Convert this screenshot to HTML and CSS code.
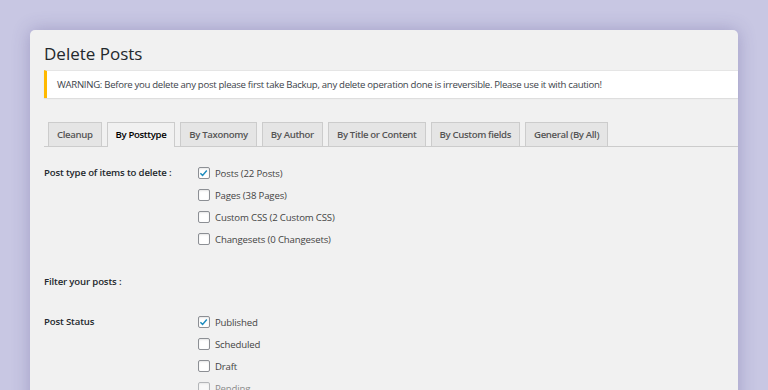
FILE: index.html
```html
<!DOCTYPE html>
<html lang="en">
<head>
  <meta charset="UTF-8" />
  <meta name="viewport" content="width=device-width, initial-scale=1.0"/>
  <title>Delete Posts</title>
  <link rel="stylesheet" href="styles.css">
</head>
<body>

  <div class="wrap">
    <h1>Delete Posts</h1>

    <div class="notice">
      WARNING: Before you delete any post please first take Backup, any delete operation done is irreversible. Please use it with caution!
    </div>

    <div class="tabs">
      <a href="#" class="tab">Cleanup</a>
      <a href="#" class="tab active">By Posttype</a>
      <a href="#" class="tab">By Taxonomy</a>
      <a href="#" class="tab">By Author</a>
      <a href="#" class="tab">By Title or Content</a>
      <a href="#" class="tab">By Custom fields</a>
      <a href="#" class="tab">General (By All)</a>
    </div>

    <div class="field">
      <div class="label">Post type of items to delete :</div>
      <div class="options">
        <label class="option"><span class="box checked"><svg viewBox="0 0 12 12"><path d="M2.6 6.2 L5 8.6 L9.6 3.2" /></svg></span>Posts (22 Posts)</label>
        <label class="option"><span class="box"></span>Pages (38 Pages)</label>
        <label class="option"><span class="box"></span>Custom CSS (2 Custom CSS)</label>
        <label class="option"><span class="box"></span>Changesets (0 Changesets)</label>
      </div>
    </div>

    <div class="field filter">
      <div class="label">Filter your posts :</div>
    </div>

    <div class="field">
      <div class="label">Post Status</div>
      <div class="options">
        <label class="option"><span class="box checked"><svg viewBox="0 0 12 12"><path d="M2.6 6.2 L5 8.6 L9.6 3.2" /></svg></span>Published</label>
        <label class="option"><span class="box"></span>Scheduled</label>
        <label class="option"><span class="box"></span>Draft</label>
        <label class="option faded"><span class="box"></span>Pending</label>
      </div>
    </div>
  </div>

</body>
</html>
```

FILE: styles.css
```css
body {
  margin: 0;
  background-color: #c8c7e3;
  font-family: 'Open Sans', 'Noto Sans', sans-serif;
  color: #23282d;
  height: 390px;
  overflow: hidden;
}

.wrap {
  margin: 30px 0 0 30px;
  width: 694px;
  height: 400px;
  padding: 12px 0 0 14px;
  background-color: #f1f1f1;
  border-radius: 5px 5px 0 0;
  box-shadow: 0 0 18px rgba(70, 60, 130, 0.3);
}

h1 {
  font-size: 17px;
  font-weight: 400;
  line-height: 24px;
  margin: 0 0 4px 0;
  color: #23282d;
}

.notice {
  background-color: #fff;
  border-left: 3px solid #ffb900;
  box-shadow: 0 1px 1px rgba(0, 0, 0, 0.08);
  border-top: 1px solid #e5e5e5;
  font-size: 9.6px;
  letter-spacing: -0.3px;
  line-height: 27px;
  padding-left: 10px;
  color: #3c434a;
}

.tabs {
  margin-top: 24px;
  padding-left: 4px;
  display: flex;
  gap: 5px;
  border-bottom: 1px solid #ccc;
  height: 24px;
}

.tab {
  display: block;
  height: 23px;
  line-height: 23px;
  padding: 0 8px;
  font-size: 9.6px;
  letter-spacing: -0.35px;
  font-weight: 600;
  color: #555;
  text-decoration: none;
  background-color: #e5e5e5;
  border: 1px solid #ccc;
  border-bottom: none;
}

.tab.active {
  background-color: #f1f1f1;
  color: #000;
  height: 24px;
  margin-bottom: -1px;
}

.field {
  display: grid;
  grid-template-columns: 154px 1fr;
  margin-top: 16px;
  font-size: 9.6px;
  letter-spacing: -0.15px;
}

.label {
  font-weight: 600;
  color: #23282d;
  line-height: 20px;
}

.options {
  display: flex;
  flex-direction: column;
  gap: 2px;
}

.option {
  display: flex;
  align-items: center;
  height: 20px;
  color: #444;
}

.option.faded {
  opacity: 0.6;
}

.box {
  width: 10px;
  height: 10px;
  border: 1px solid #8c8f94;
  border-radius: 2px;
  background-color: #fff;
  margin-right: 5px;
  display: flex;
  box-shadow: inset 0 1px 2px rgba(0, 0, 0, 0.1);
}

.box svg {
  width: 12px;
  height: 12px;
  margin: -1px 0 0 -1px;
}

.box path {
  fill: none;
  stroke: #1e8cbe;
  stroke-width: 1.6;
}

.filter {
  margin-top: 23px;
}

.filter + .field {
  margin-top: 20px;
}
```
